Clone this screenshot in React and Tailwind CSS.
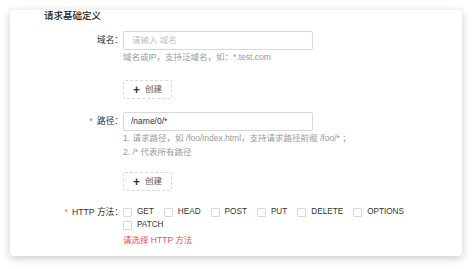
import React from "react";

const methods = ["GET", "HEAD", "POST", "PUT", "DELETE", "OPTIONS", "PATCH"];

const Label = ({ required, children }) => (
  <div className="w-[113px] shrink-0 text-right text-[8.7px] text-[#333]">
    {required && <span className="mr-[4px] text-[#f5616a]">*</span>}
    {children}
  </div>
);

const CreateButton = () => (
  <div className="flex h-[19px] w-[49px] items-center justify-center gap-[5px] rounded-[2px] border border-dashed border-[#d9d9d9] bg-white">
    <span className="text-[12px] font-bold leading-none text-[#333]">+</span>
    <span className="text-[#555]">创建</span>
  </div>
);

export default function App() {
  return (
    <div className="h-[269px] w-[474px] overflow-hidden bg-white pl-[10px] pt-[10px] font-['Liberation_Sans','Noto_Sans_CJK_SC',sans-serif] text-[8.5px]">
      <div className="h-[246px] w-[452px] rounded-[4px] bg-white shadow-[0_2px_9px_rgba(0,0,0,0.22)]">
        <div className="pl-[34px] pt-[1px] text-[9.5px] font-medium leading-[10px] text-[#262626]">
          请求基础定义
        </div>

        {/* 域名 */}
        <div className="mt-[10px] flex">
          <div className="flex h-[19px] items-center">
            <Label>域名：</Label>
          </div>
          <div>
            <div className="flex h-[19px] w-[190px] items-center rounded-[2px] border border-[#d9d9d9] px-[8px] text-[#bfbfbf]">
              请输入 域名
            </div>
            <div className="leading-[14px] text-[#999]">域名或IP，支持泛域名，如：*.test.com</div>
            <div className="mt-[16px]">
              <CreateButton />
            </div>
          </div>
        </div>

        {/* 路径 */}
        <div className="mt-[13px] flex">
          <div className="flex h-[19px] items-center">
            <Label required>路径：</Label>
          </div>
          <div>
            <div className="flex h-[19px] w-[190px] items-center rounded-[2px] border border-[#d9d9d9] px-[7px] text-[#333]">
              /name/0/*
            </div>
            <div className="leading-[14px] text-[#999]">
              <div>1. 请求路径，如 /foo/index.html，支持请求路径前缀 /foo/* ；</div>
              <div>2. /* 代表所有路径</div>
            </div>
            <div className="mt-[13px]">
              <CreateButton />
            </div>
          </div>
        </div>

        {/* HTTP 方法 */}
        <div className="mt-[15px] flex">
          <div className="flex h-[13px] items-center">
            <Label required>HTTP 方法：</Label>
          </div>
          <div>
            <div className="flex w-[300px] flex-wrap">
              {methods.map((m) => (
                <label key={m} className="mr-[10px] flex h-[13px] items-center">
                  <span className="h-[9px] w-[9px] rounded-[1px] border border-[#d9d9d9] bg-white" />
                  <span className="ml-[5px] text-[8.2px] text-[#333]">{m}</span>
                </label>
              ))}
            </div>
            <div className="mt-[1px] leading-[14px] text-[#f5484f]">请选择 HTTP 方法</div>
          </div>
        </div>
      </div>
    </div>
  );
}
